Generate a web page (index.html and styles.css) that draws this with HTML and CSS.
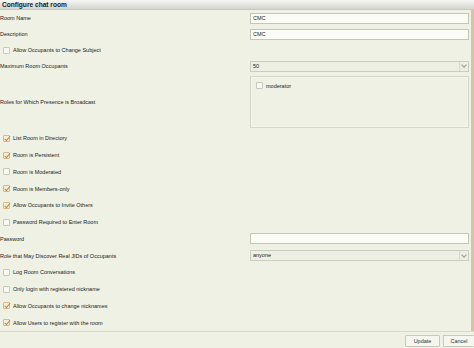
FILE: index.html
```
<!DOCTYPE html>
<html lang="en">
<head>
  <meta charset="UTF-8">
  <title>Configure chat room</title>
  <link rel="stylesheet" href="styles.css">
</head>
<body>
  <div class="title">Configure chat room</div>
  <div class="form">
    <div class="row r16"><span>Room Name</span><div class="input">CMC</div></div>
    <div class="row r16"><span>Description</span><div class="input">CMC</div></div>
    <div class="row r16"><label class="check"><i class="box"></i>Allow Occupants to Change Subject</label></div>
    <div class="row r16"><span>Maximum Room Occupants</span><div class="select">50<b class="arrow"></b></div></div>
    <div class="row roles"><span>Roles for Which Presence is Broadcast</span>
      <div class="rolebox"><label class="check"><i class="box"></i>moderator</label></div>
    </div>
    <div class="row"><label class="check"><i class="box on"></i>List Room in Directory</label></div>
    <div class="row"><label class="check"><i class="box on"></i>Room is Persistent</label></div>
    <div class="row"><label class="check"><i class="box"></i>Room is Moderated</label></div>
    <div class="row"><label class="check"><i class="box on"></i>Room is Members-only</label></div>
    <div class="row"><label class="check"><i class="box on"></i>Allow Occupants to Invite Others</label></div>
    <div class="row"><label class="check"><i class="box"></i>Password Required to Enter Room</label></div>
    <div class="row"><span>Password</span><div class="input"></div></div>
    <div class="row"><span>Role that May Discover Real JIDs of Occupants</span><div class="select">anyone<b class="arrow"></b></div></div>
    <div class="row"><label class="check"><i class="box"></i>Log Room Conversations</label></div>
    <div class="row"><label class="check"><i class="box"></i>Only login with registered nickname</label></div>
    <div class="row"><label class="check"><i class="box on"></i>Allow Occupants to change nicknames</label></div>
    <div class="row"><label class="check"><i class="box on"></i>Allow Users to register with the room</label></div>
  </div>
  <div class="footer">
    <button class="btn">Update</button>
    <button class="btn cancel">Cancel</button>
  </div>
</body>
</html>
```

FILE: styles.css
```
* {
  box-sizing: border-box;
  margin: 0;
  padding: 0;
}
body {
  width: 474px;
  height: 348px;
  overflow: hidden;
  background: #eef1e3;
  color: #222;
  font-family: "Liberation Sans", Arial, sans-serif;
  font-size: 5.5px;
}
.title {
  height: 10px;
  line-height: 10px;
  padding-left: 2px;
  font-weight: bold;
  font-size: 6.6px;
  color: #1a1a1a;
  background: linear-gradient(#f6f6f2, #d4d5cf);
  border-bottom: 1px solid #c8c9c2;
}
.form {
  height: 321px;
  border-right: 3px solid #d8c4a0;
}
.row {
  height: 16.75px;
  display: grid;
  grid-template-columns: 250px 219px;
  align-items: center;
}
.row.r16 {
  height: 16px;
}
.row.roles {
  height: 56px;
}
.check {
  grid-column: 1 / 3;
  display: flex;
  align-items: center;
  gap: 3px;
  padding-left: 3px;
}
.box {
  width: 7px;
  height: 7px;
  border: 1px solid #c7c9bd;
  background: #f7f8f2;
  border-radius: 1px;
  display: inline-block;
  position: relative;
}
.box.on {
  border-color: #d9b98a;
  background: #f3eee0;
}
.box.on::after {
  content: "";
  position: absolute;
  left: 1.5px;
  top: -1px;
  width: 2px;
  height: 4.5px;
  border: solid #c6842e;
  border-width: 0 1.5px 1.5px 0;
  transform: rotate(40deg);
}
.input {
  height: 11px;
  line-height: 9px;
  border: 1px solid #c4c6ba;
  background: #fbfcf6;
  padding-left: 2px;
}
.select {
  height: 11px;
  line-height: 9px;
  border: 1px solid #cbcdc1;
  background: #edefe3;
  padding-left: 2px;
  position: relative;
}
.arrow {
  position: absolute;
  right: 0;
  top: 0;
  width: 9px;
  height: 9px;
  border-left: 1px solid #d6d8cc;
}
.arrow::after {
  content: "";
  position: absolute;
  left: 2px;
  top: 1.5px;
  width: 3px;
  height: 3px;
  border: solid #9a9c92;
  border-width: 0 1px 1px 0;
  transform: rotate(45deg);
}
.rolebox {
  align-self: start;
  margin-top: 2px;
  height: 52px;
  border: 1px solid #d4d6ca;
  box-shadow: inset 0 0 0 1px #f4f6ec;
  padding-top: 5px;
}
.rolebox .check {
  padding-left: 5px;
}
.footer {
  height: 17px;
  border-top: 1px solid #d6dacb;
  display: flex;
  justify-content: flex-end;
  align-items: center;
  gap: 3px;
  padding-top: 1px;
}
.btn {
  height: 12px;
  width: 35px;
  font-family: "Liberation Sans", Arial, sans-serif;
  font-size: 5.5px;
  color: #333;
  background: #f5f6ef;
  border: 1px solid #c8cabe;
  border-radius: 1px;
}
.btn.cancel {
  width: 31px;
  border-right: none;
}
```
